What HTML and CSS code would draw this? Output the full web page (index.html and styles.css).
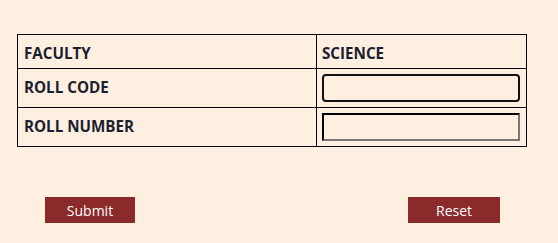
FILE: index.html
```html
<!DOCTYPE html>
<html>
<head>
<meta charset="utf-8">
<link rel="stylesheet" href="styles.css">
</head>
<body>
<div class="page">
  <table class="form-table">
    <colgroup>
      <col class="col-label">
      <col class="col-value">
    </colgroup>
    <tr class="row-head">
      <td class="label">FACULTY</td>
      <td class="value">SCIENCE</td>
    </tr>
    <tr class="row-input">
      <td class="label">ROLL CODE</td>
      <td class="value"><input class="field field-focus" type="text"></td>
    </tr>
    <tr class="row-input">
      <td class="label">ROLL NUMBER</td>
      <td class="value"><input class="field" type="text"></td>
    </tr>
  </table>
  <div class="actions">
    <button class="btn btn-submit">Submit</button>
    <button class="btn btn-reset">Reset</button>
  </div>
</div>
</body>
</html>
```
FILE: styles.css
```css
html, body {
  margin: 0;
  padding: 0;
  background: #ffefe0;
}
.page {
  padding: 34px 0 0 17px;
  width: 509px;
  font-family: "Open Sans", "Noto Sans", sans-serif;
}
.form-table {
  border-collapse: collapse;
  width: 509px;
  table-layout: fixed;
}
.col-label {
  width: 299px;
}
.col-value {
  width: 210px;
}
.form-table td {
  border: 1px solid #000;
  padding: 0 5px 0 6px;
  font-weight: bold;
  font-size: 15.2px;
  color: #1a1f30;
  vertical-align: middle;
}
.form-table td.value {
  padding-left: 5px;
}
.row-head td {
  height: 31px;
  padding-top: 2px;
}
.row-input td.label {
  height: 35px;
  padding-bottom: 3px;
}
.row-input td.value {
  height: 38px;
}
.field {
  display: block;
  box-sizing: border-box;
  width: 198px;
  height: 28px;
  margin: 0;
  background: #ffefe0;
  border: 2px inset #767676;
  border-top-color: #222;
  border-left-color: #222;
  padding: 0;
}
.field-focus {
  border: 2px solid #111;
  border-radius: 4px;
}
.actions {
  display: flex;
  justify-content: space-between;
  padding: 50px 26px 0 28px;
}
.btn {
  height: 26px;
  background: #8b2a2a;
  color: #fff;
  border: none;
  font-family: "Open Sans", "Noto Sans", sans-serif;
  font-size: 14px;
  padding: 0;
}
.btn-submit {
  width: 90px;
}
.btn-reset {
  width: 92px;
}
```
